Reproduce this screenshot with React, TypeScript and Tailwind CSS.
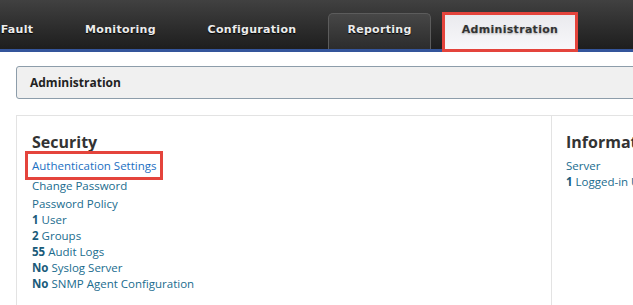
import React from "react";

const TABS = [
  { label: "Fault", w: "w-[72px]", ml: "ml-[-19px]" },
  { label: "Monitoring", w: "w-[109px]", ml: "ml-[13px]" },
  { label: "Configuration", w: "w-[126px]", ml: "ml-[14px]" },
];

const LINKS: { num?: string; text: string; cls: string }[] = [
  { text: "Change Password", cls: "mt-[4px]" },
  { text: "Password Policy", cls: "mt-[2px]" },
  { num: "1", text: "User", cls: "" },
  { num: "2", text: "Groups", cls: "" },
  { num: "55", text: "Audit Logs", cls: "" },
  { num: "No", text: "Syslog Server", cls: "" },
  { num: "No", text: "SNMP Agent Configuration", cls: "" },
];

export default function App() {
  return (
    <div className="w-[633px] h-[305px] overflow-hidden bg-white font-['Open_Sans',sans-serif]">
      {/* top nav */}
      <div className="relative h-[52px] bg-gradient-to-b from-[#414141] to-[#1e1e1e] border-b-[3px] border-[#34559b]">
        <div className="flex items-end h-[49px] font-['DejaVu_Sans',sans-serif] font-bold text-[11px] tracking-[0.3px]">
          {TABS.map((t) => (
            <div key={t.label} className={`${t.w} ${t.ml} h-[36px] pb-[2px] flex items-center justify-center text-[#ececec] [text-shadow:0_1px_1px_#000]`}>
              {t.label}
            </div>
          ))}
          <div className="ml-[13px] w-[103px] h-[36px] pb-[2px] flex items-center justify-center rounded-t-[5px] border border-b-0 border-[#5c5c5c] bg-gradient-to-b from-[#474747] to-[#2c2c2c] text-[#ececec] [text-shadow:0_1px_1px_#000]">
            Reporting
          </div>
          <div className="ml-[11px] w-[136px] h-[40px] mb-[-3px] flex items-center justify-center border-[3px] border-[#e4443c] bg-gradient-to-b from-[#eaeaee] to-[#f8f8fa] text-[#333] [text-shadow:0_1px_2px_#aaa] pb-[4px]">
            Administration
          </div>
        </div>
      </div>

      {/* breadcrumb header */}
      <div className="ml-[16px] mt-[14px] mr-[-10px] h-[33px] flex items-center pl-[13px] bg-[#f0f0f0] border border-[#8d9daa] rounded-[3px] text-[12px] font-bold text-[#222]">
        Administration
      </div>

      {/* content panel */}
      <div className="ml-[16px] mt-[16px] mr-[-10px] h-[200px] border border-[#e3e3e3] flex">
        <div className="w-[535px] shrink-0 pl-[15px] pt-[16px] border-r border-[#e3e3e3]">
          <div className="text-[16px] leading-[20px] font-bold text-[#333]">Security</div>
          <div className="relative mt-[6px] text-[11.5px] leading-[16px]">
            <div className="absolute left-[-7px] top-[-7px] w-[138px] h-[29px] border-[3px] border-[#e4443c]" />
            <div className="text-[#1b6fc2]">Authentication Settings</div>
            {LINKS.map((l, i) => (
              <div key={i} className={`${l.cls} text-[#206c8e]`}>
                {l.num && <span className="font-bold text-[#1a5b7a]">{l.num} </span>}
                {l.text}
              </div>
            ))}
          </div>
        </div>
        <div className="pl-[14px] pt-[16px] whitespace-nowrap">
          <div className="text-[16px] leading-[20px] font-bold text-[#333]">Information</div>
          <div className="mt-[6px] text-[11.5px] leading-[16px] text-[#206c8e]">
            <div>Server</div>
            <div>
              <span className="font-bold text-[#1a5b7a]">1 </span>Logged-in Users
            </div>
          </div>
        </div>
      </div>
    </div>
  );
}
